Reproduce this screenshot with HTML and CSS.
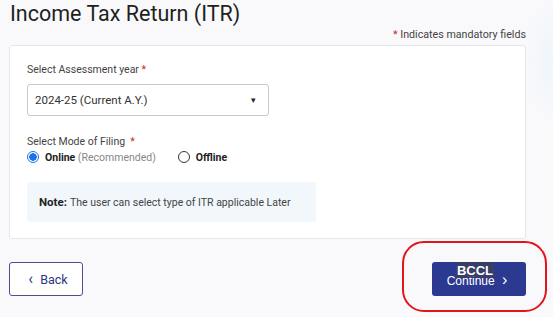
FILE: index.html
```html
<!DOCTYPE html>
<html lang="en">
<head>
    <meta charset="UTF-8">
    <meta name="viewport" content="width=device-width, initial-scale=1.0">
    <title>Income Tax Return (ITR)</title>
    <link rel="stylesheet" href="styles.css">
</head>
<body>
    <div class="page">
        <h1>Income Tax Return (ITR)</h1>
        <p class="mandatory"><span class="req">*</span> Indicates mandatory fields</p>

        <div class="carte">
            <label class="champ-label">Select Assessment year <span class="req">*</span></label>
            <div class="select">
                <span>2024-25 (Current A.Y.)</span>
                <span class="fleche">&#9662;</span>
            </div>

            <label class="champ-label mode">Select Mode of Filing &nbsp;<span class="req">*</span></label>
            <div class="radios">
                <span class="radio checked"></span>
                <span class="radio-texte"><b>Online</b> (Recommended)</span>
                <span class="radio"></span>
                <span class="radio-texte"><b>Offline</b></span>
            </div>

            <div class="note"><b>Note:</b> The user can select type of ITR applicable Later</div>
        </div>

        <div class="actions">
            <button class="btn-back"><span class="chev">&lsaquo;</span> Back</button>
            <div class="continue-wrap">
                <span class="cercle"></span>
                <button class="btn-continue">Continue <span class="chev">&rsaquo;</span></button>
                <span class="badge">BCCL</span>
            </div>
        </div>
    </div>
</body>
</html>
```

FILE: styles.css
```css
body {
    margin: 0;
    font-family: Roboto, "Liberation Sans", sans-serif;
    background: radial-gradient(ellipse 30px 60px at 553px 60px, #eef5fb, rgba(238, 245, 251, 0)), #f9f9fc;
    height: 317px;
    overflow: hidden;
}
.page {
    width: 517px;
    margin-left: 9px;
}
h1 {
    margin: 0;
    padding-left: 1px;
    font-size: 21.5px;
    font-weight: 400;
    line-height: 27px;
    color: #1f1f1f;
}
.mandatory {
    margin: 1px 0 0;
    height: 17px;
    text-align: right;
    font-size: 10.7px;
    line-height: 14px;
    color: #444;
}
.req {
    color: #c62828;
}
.carte {
    background: #fff;
    border: 1px solid #e6e6ec;
    border-radius: 3px;
    padding: 16px 18px 16px 17px;
}
.champ-label {
    display: block;
    font-size: 10.5px;
    line-height: 16px;
    color: #444;
}
.select {
    margin-top: 6px;
    width: 242px;
    height: 32px;
    box-sizing: border-box;
    border: 1px solid #c8c8cc;
    border-radius: 3px;
    display: flex;
    align-items: center;
    justify-content: space-between;
    padding: 0 12px 0 7px;
    font-size: 11.5px;
    color: #333;
}
.fleche {
    font-size: 9px;
    color: #222;
}
.mode {
    margin-top: 18px;
}
.radios {
    display: flex;
    align-items: center;
    height: 14px;
    font-size: 10.5px;
    color: #222;
}
.radio {
    width: 10px;
    height: 10px;
    border: 1.5px solid #333;
    border-radius: 50%;
    margin-right: 6px;
}
.radio.checked {
    border-color: #1a73e8;
    background: radial-gradient(circle, #1a73e8 3.5px, #fff 4px);
}
.radio-texte {
    margin-right: 22px;
    color: #888;
}
.radio-texte b {
    color: #222;
}
.note {
    margin-top: 18px;
    width: 289px;
    height: 40px;
    box-sizing: border-box;
    padding: 0 12px;
    display: flex;
    align-items: center;
    background: #f2f7fb;
    border-radius: 3px;
    font-size: 10.5px;
    color: #444;
}
.note b {
    font-size: 11.5px;
    color: #222;
    margin-right: 3px;
}
.actions {
    margin-top: 23px;
    display: flex;
    justify-content: space-between;
    align-items: flex-start;
}
.btn-back {
    width: 74px;
    height: 34px;
    background: #fff;
    border: 1px solid #4d4f96;
    border-radius: 3px;
    color: #2f3680;
    font-family: Roboto, "Liberation Sans", sans-serif;
    font-size: 12.5px;
}
.chev {
    font-size: 16px;
    margin: 0 4px;
    line-height: 10px;
}
.continue-wrap {
    position: relative;
}
.btn-continue {
    width: 94px;
    height: 34px;
    background: #2b3990;
    border: none;
    border-radius: 3px;
    color: #fff;
    font-family: "Liberation Sans", Arial, sans-serif;
    font-size: 12px;
    padding-top: 4px;
}
.badge {
    position: absolute;
    left: 24px;
    top: 0;
    width: 38px;
    height: 16px;
    background: rgba(60, 64, 90, 0.75);
    color: #fff;
    font-family: "Liberation Sans", Arial, sans-serif;
    font-weight: bold;
    font-size: 13px;
    line-height: 17px;
    text-align: center;
}
.cercle {
    position: absolute;
    left: -30px;
    top: -21px;
    width: 145px;
    height: 71px;
    box-sizing: border-box;
    border: 2.5px solid #e3141b;
    border-radius: 22px;
}
```
